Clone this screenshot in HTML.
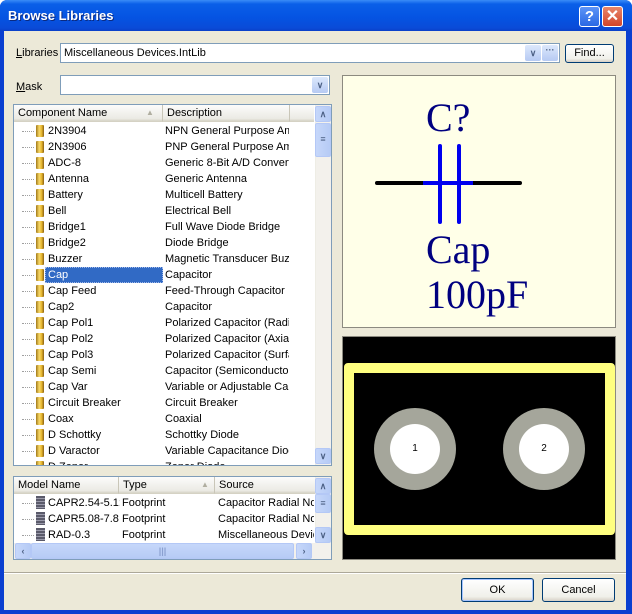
<!DOCTYPE html>
<html><head><style>
*{margin:0;padding:0;box-sizing:border-box}
body{width:632px;height:614px;overflow:hidden;background:#fff;font-family:Tahoma,"Liberation Sans",sans-serif;font-size:11px;color:#000}
.a{position:absolute}
#win{position:absolute;left:0;top:0;width:632px;height:614px;background:#0a3fd0;border-radius:7px 7px 0 0}
#title{position:absolute;left:0;top:0;width:632px;height:31px;background:linear-gradient(#3a8cf7 0,#0a5fe8 4px,#0553e2 18px,#0a4bd8 28px,#0a3fc8 31px);border-radius:7px 7px 0 0}
#client{position:absolute;left:4px;top:31px;width:622px;height:579px;background:#ece9d8}
.combo{position:absolute;background:#fff;border:1px solid #7f9db9;height:20px}
.dd{position:absolute;width:16px;height:16px;background:linear-gradient(#dce8fc,#b6caf3);border-radius:2px;top:1px;color:#4d6185;font-size:9px;text-align:center;line-height:16px;font-weight:bold}
.btn{position:absolute;border:1px solid #003c74;border-radius:3px;background:linear-gradient(#fff,#f0f0ea 80%,#d6d0c5);text-align:center;font-size:11px}
.list{position:absolute;background:#fff;border:1px solid #7f9db9;overflow:hidden}
.hdr{position:absolute;top:0;height:17px;background:linear-gradient(#fcfcfb,#ebeae4 85%,#d6d3c6);border-bottom:1px solid #d5d2c4;line-height:16px;padding-left:4px;border-right:1px solid #c9c6b8}
.row{position:absolute;height:16px;line-height:16px;white-space:nowrap}
.ic{position:absolute;width:8px;height:12px;background:linear-gradient(90deg,#a07818,#f8d868 40%,#e8b830 70%,#8a6010);top:2px;border-radius:1px}
.ic2{position:absolute;width:9px;height:13px;background:repeating-linear-gradient(#5a5a6a 0 2px,#9a9aaa 2px 3px);top:1px}
.dot{position:absolute;border-top:1px dotted #a0a0a0;width:12px;top:8px}
.vs{position:absolute;width:17px;background:#f3f1ec;border-left:1px solid #eeede5}
.sb{position:absolute;width:16px;height:16px;background:linear-gradient(90deg,#c6d7fa,#b6cbf5);border:1px solid #b4c8f6;border-radius:2px;color:#4d6185;font-size:9px;text-align:center;line-height:14px;font-weight:bold}
.serif{font-family:"Liberation Serif",serif;color:#000080;position:absolute}
.clip{position:absolute;overflow:hidden;white-space:nowrap}
</style></head><body>
<div id="win"></div>
<div id="title"></div>
<div class="a" style="left:8px;top:8px;color:#fff;font-weight:bold;font-size:13px;font-family:'Liberation Sans',sans-serif;text-shadow:1px 1px #0a2a80">Browse Libraries</div>
<div class="a" style="left:579px;top:6px;width:21px;height:21px;border:1px solid #fff;border-radius:3px;background:linear-gradient(#5d94f7,#2a68e4);color:#fff;font-weight:bold;font-size:15px;text-align:center;line-height:19px">?</div>
<div class="a" style="left:602px;top:6px;width:21px;height:21px;border:1px solid #fff;border-radius:3px;background:linear-gradient(#e8866a,#d2442a);color:#fff;font-weight:bold;font-size:16px;text-align:center;line-height:19px">✕</div>
<div id="client"></div>

<div class="a" style="left:16px;top:47px"><u>L</u>ibraries</div>
<div class="combo" style="left:60px;top:43px;width:500px;padding-left:3px;line-height:18px">Miscellaneous Devices.IntLib
<div class="dd" style="left:464px">&#8744;</div><div class="dd" style="left:481px;line-height:11px">···</div></div>
<div class="btn" style="left:565px;top:44px;width:49px;height:19px;line-height:17px">Find...</div>

<div class="a" style="left:16px;top:81px"><u>M</u>ask</div>
<div class="combo" style="left:60px;top:75px;width:270px"><div class="dd" style="left:251px">&#8744;</div></div>

<div class="list" style="left:13px;top:104px;width:319px;height:362px">
<div class="hdr" style="left:0;width:149px">Component Name<span style="position:absolute;left:132px;color:#b0aea0;font-size:8px">▲</span></div>
<div class="hdr" style="left:149px;width:127px">Description</div>
<div class="hdr" style="left:276px;width:24px;border-right:0"></div>
<div class="vs" style="left:301px;top:0;height:360px"></div>
<div class="sb" style="left:301px;top:1px">&#8743;</div>
<div class="sb" style="left:301px;top:18px;height:34px;line-height:30px">≡</div>
<div class="sb" style="left:301px;top:343px">&#8744;</div>
<div id="rows"></div>
</div>

<div class="list" style="left:13px;top:476px;width:319px;height:84px">
<div class="hdr" style="left:0;width:105px">Model Name</div>
<div class="hdr" style="left:105px;width:96px">Type<span style="position:absolute;left:82px;color:#b0aea0;font-size:8px">▲</span></div>
<div class="hdr" style="left:201px;width:100px;border-right:0">Source</div>
<div class="vs" style="left:301px;top:0;height:66px"></div>
<div class="sb" style="left:301px;top:1px">&#8743;</div>
<div class="sb" style="left:301px;top:17px;height:19px;line-height:16px">≡</div>
<div class="sb" style="left:301px;top:50px">&#8744;</div>
<div class="a" style="left:0;top:66px;width:317px;height:16px;background:#f3f1ec"></div>
<div class="sb" style="left:1px;top:66px">&lsaquo;</div>
<div class="sb" style="left:17px;top:66px;width:263px;background:linear-gradient(#c6d7fa,#b6cbf5);color:#8aa0d0">|||</div>
<div class="sb" style="left:282px;top:66px">&rsaquo;</div>
<div class="row" style="left:0;top:18px;width:301px"><div class="dot" style="left:8px"></div><div class="ic2" style="left:22px"></div><span class="clip" style="left:34px;width:72px">CAPR2.54-5.1:</span><span class="clip" style="left:108px;width:92px">Footprint</span><span class="clip" style="left:204px;width:96px">Capacitor Radial Nor</span></div>
<div class="row" style="left:0;top:34px;width:301px"><div class="dot" style="left:8px"></div><div class="ic2" style="left:22px"></div><span class="clip" style="left:34px;width:72px">CAPR5.08-7.8</span><span class="clip" style="left:108px;width:92px">Footprint</span><span class="clip" style="left:204px;width:96px">Capacitor Radial Nor</span></div>
<div class="row" style="left:0;top:50px;width:301px"><div class="dot" style="left:8px"></div><div class="ic2" style="left:22px"></div><span class="clip" style="left:34px;width:72px">RAD-0.3</span><span class="clip" style="left:108px;width:92px">Footprint</span><span class="clip" style="left:204px;width:96px">Miscellaneous Devic</span></div>
</div>

<div class="a" style="left:342px;top:75px;width:274px;height:253px;background:#ffffe8;border:1px solid #8c8a80">
<div class="serif" style="left:83px;top:18px;font-size:40px">C?</div>
<div class="a" style="left:32px;top:105px;width:147px;height:4px;background:#000;border-radius:2px"></div>
<div class="a" style="left:80px;top:105px;width:50px;height:4px;background:#0000ee"></div>
<div class="a" style="left:95px;top:68px;width:4px;height:80px;background:#0000ee;border-radius:2px"></div>
<div class="a" style="left:114px;top:68px;width:4px;height:80px;background:#0000ee;border-radius:2px"></div>
<div class="serif" style="left:83px;top:150px;font-size:40px">Cap</div>
<div class="serif" style="left:83px;top:195px;font-size:40px">100pF</div>
</div>

<div class="a" style="left:342px;top:336px;width:274px;height:224px;background:#000;border:1px solid #8c8a80">
<div class="a" style="left:1px;top:26px;width:271px;height:172px;border:10px solid #ffff80;border-radius:4px"></div>
<div class="a" style="left:31px;top:71px;width:82px;height:82px;border-radius:50%;background:#a5a69b"></div>
<div class="a" style="left:47px;top:87px;width:50px;height:50px;border-radius:50%;background:#fff;text-align:center;line-height:50px;font-size:10px">1</div>
<div class="a" style="left:160px;top:71px;width:82px;height:82px;border-radius:50%;background:#a5a69b"></div>
<div class="a" style="left:176px;top:87px;width:50px;height:50px;border-radius:50%;background:#fff;text-align:center;line-height:50px;font-size:10px">2</div>
</div>

<div class="a" style="left:4px;top:572px;width:622px;height:2px;border-top:1px solid #aca899;border-bottom:1px solid #fff"></div>
<div class="btn" style="left:461px;top:578px;width:73px;height:24px;line-height:22px;box-shadow:inset 0 0 0 1px #a6c5ff">OK</div>
<div class="btn" style="left:542px;top:578px;width:73px;height:24px;line-height:22px">Cancel</div>

<script>
var d=[["2N3904","NPN General Purpose Am"],["2N3906","PNP General Purpose Am"],["ADC-8","Generic 8-Bit A/D Convert"],["Antenna","Generic Antenna"],["Battery","Multicell Battery"],["Bell","Electrical Bell"],["Bridge1","Full Wave Diode Bridge"],["Bridge2","Diode Bridge"],["Buzzer","Magnetic Transducer Buz"],["Cap","Capacitor"],["Cap Feed","Feed-Through Capacitor"],["Cap2","Capacitor"],["Cap Pol1","Polarized Capacitor (Radia"],["Cap Pol2","Polarized Capacitor (Axial)"],["Cap Pol3","Polarized Capacitor (Surfa"],["Cap Semi","Capacitor (Semiconductor"],["Cap Var","Variable or Adjustable Cap"],["Circuit Breaker","Circuit Breaker"],["Coax","Coaxial"],["D Schottky","Schottky Diode"],["D Varactor","Variable Capacitance Dioc"],["D Zener","Zener Diode"]];
var h="";d.forEach(function(r,i){var t=18+i*16;var s=i==9;
h+='<div class="row" style="left:0;top:'+t+'px;width:301px"><div class="dot" style="left:8px"></div><div class="ic" style="left:22px"></div>'+
(s?'<div style="position:absolute;left:31px;top:0;width:118px;height:16px;background:#316ac5;border:1px dotted #a0b8e8"></div>':'')+
'<span class="clip" style="left:34px;width:114px;'+(s?'color:#fff':'')+'">'+r[0]+'</span><span class="clip" style="left:151px;width:124px">'+r[1]+'</span></div>';});
document.getElementById("rows").innerHTML=h;
</script>
</body></html>
